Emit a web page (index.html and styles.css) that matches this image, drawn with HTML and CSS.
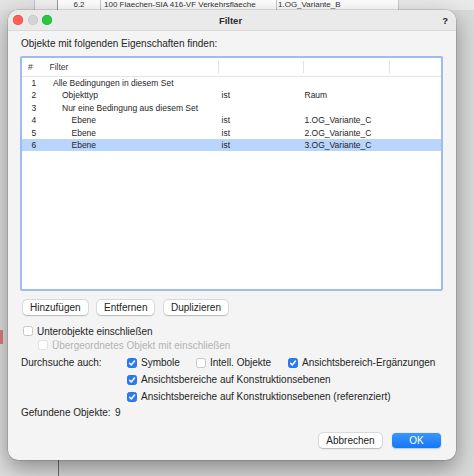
FILE: index.html
```html
<!DOCTYPE html>
<html lang="de">
<head>
<meta charset="utf-8">
<title>Filter</title>
<link rel="stylesheet" href="styles.css">
</head>
<body>
<div class="desktop">
  <div class="bg-row">
    <div class="bg-g0"></div>
    <div class="bg-g1"></div>
    <div class="bg-num">6.2</div>
    <div class="bg-name">100 Flaechen-SIA 416-VF Verkehrsflaeche</div>
    <div class="bg-val">1.OG_Variante_B</div>
    <div class="bg-rest"></div>
  </div>
  <div class="bg-body">
    <div class="bg-left"><div class="red-mark"></div></div>
    <div class="bg-main"></div>
  </div>

  <div class="dialog">
    <div class="titlebar">
      <div class="lights">
        <span class="light red"></span>
        <span class="light gray"></span>
        <span class="light green"></span>
      </div>
      <div class="title">Filter</div>
      <div class="help">?</div>
    </div>

    <div class="content">
      <div class="caption">Objekte mit folgenden Eigenschaften finden:</div>

      <div class="list">
        <div class="list-head">
          <div class="c-num h-num">#</div>
          <div class="c-name h-name">Filter</div>
          <div class="c-op sep"></div>
          <div class="c-val sep"></div>
          <div class="c-end sep"></div>
        </div>
        <div class="row"><div class="c-num">1</div><div class="c-name l0">Alle Bedingungen in diesem Set</div><div class="c-op"></div><div class="c-val"></div></div>
        <div class="row"><div class="c-num">2</div><div class="c-name l1">Objekttyp</div><div class="c-op">ist</div><div class="c-val">Raum</div></div>
        <div class="row"><div class="c-num">3</div><div class="c-name l1">Nur eine Bedingung aus diesem Set</div><div class="c-op"></div><div class="c-val"></div></div>
        <div class="row"><div class="c-num">4</div><div class="c-name l2">Ebene</div><div class="c-op">ist</div><div class="c-val">1.OG_Variante_C</div></div>
        <div class="row"><div class="c-num">5</div><div class="c-name l2">Ebene</div><div class="c-op">ist</div><div class="c-val">2.OG_Variante_C</div></div>
        <div class="row sel"><div class="c-num">6</div><div class="c-name l2">Ebene</div><div class="c-op">ist</div><div class="c-val">3.OG_Variante_C</div></div>
      </div>

      <div class="btn-row">
        <div class="btn">Hinzufügen</div>
        <div class="btn">Entfernen</div>
        <div class="btn">Duplizieren</div>
      </div>

      <div class="check-row">
        <span class="cb"></span><span>Unterobjekte einschließen</span>
      </div>
      <div class="check-row sub disabled">
        <span class="cb"></span><span>Übergeordnetes Objekt mit einschließen</span>
      </div>

      <div class="search">
        <div class="search-label">Durchsuche auch:</div>
        <div class="opt"><span class="cb on"><svg viewBox="0 0 10 10"><path d="M2.6 5.3 L4.3 7 L7.5 3.1"/></svg></span><span>Symbole</span></div>
        <div class="opt"><span class="cb"></span><span>Intell. Objekte</span></div>
        <div class="opt"><span class="cb on"><svg viewBox="0 0 10 10"><path d="M2.6 5.3 L4.3 7 L7.5 3.1"/></svg></span><span>Ansichtsbereich-Ergänzungen</span></div>
        <div class="opt span"><span class="cb on"><svg viewBox="0 0 10 10"><path d="M2.6 5.3 L4.3 7 L7.5 3.1"/></svg></span><span>Ansichtsbereiche auf Konstruktionsebenen</span></div>
        <div class="opt span"><span class="cb on"><svg viewBox="0 0 10 10"><path d="M2.6 5.3 L4.3 7 L7.5 3.1"/></svg></span><span>Ansichtsbereiche auf Konstruktionsebenen (referenziert)</span></div>
      </div>

      <div class="found">Gefundene Objekte:<span class="count">9</span></div>

      <div class="footer">
        <div class="btn cancel">Abbrechen</div>
        <div class="btn ok">OK</div>
      </div>
    </div>
  </div>
</div>
</body>
</html>
```
FILE: styles.css
```css
* { box-sizing: border-box; }
html, body { margin: 0; padding: 0; }
body {
  width: 474px;
  height: 476px;
  overflow: hidden;
  font-family: "Liberation Sans", Arial, sans-serif;
  color: #252525;
}

.desktop {
  position: relative;
  width: 474px;
  height: 476px;
  background: #dcdcdc;
  display: flex;
  flex-direction: column;
}

/* background application window */
.bg-row {
  display: flex;
  height: 10px;
  font-size: 8px;
  line-height: 10px;
  color: #333;
  white-space: nowrap;
}
.bg-g0 { width: 35px; background: #e3e3e3; border-right: 1px solid #c4c4c4; }
.bg-g1 { width: 23px; background: #f1f1f1; border-right: 1px solid #9a9a9a; }
.bg-num { width: 43px; background: #fff; border-right: 1px solid #c9c9c9; text-align: center; }
.bg-name { width: 176px; background: #fff; border-right: 1px solid #c9c9c9; padding-left: 3px; overflow: hidden; }
.bg-val { width: 122px; background: #fff; padding-left: 1px; border-right: 1px solid #c9c9c9; }
.bg-rest { flex: 1; background: #e9e9e9; }

.bg-body { flex: 1; display: flex; }
.bg-left { width: 59px; border-right: 1px solid #6f6f6f; background: #dedede; }
.bg-main { flex: 1; background: #d9d9d9; }
.red-mark { width: 3px; height: 14px; margin-top: 320px; background: #d97c7c; }

/* dialog window */
.dialog {
  position: absolute;
  left: 8px;
  top: 10px;
  width: 448px;
  height: 450px;
  background: #f4f4f4;
  border-radius: 10px;
  overflow: hidden;
  box-shadow: 0 0 0 0.5px rgba(0,0,0,0.22), 0 8px 22px rgba(0,0,0,0.38);
  display: flex;
  flex-direction: column;
}

.titlebar {
  height: 21px;
  flex: none;
  background: #eaeaea;
  border-bottom: 1px solid #d8d8d8;
  display: grid;
  grid-template-columns: 1fr auto 1fr;
  align-items: center;
  padding: 0 8px 0 5px;
}
.lights { display: flex; gap: 4.5px; }
.light { width: 10px; height: 10px; border-radius: 50%; }
.light.red { background: #fe5f57; box-shadow: inset 0 0 0 0.5px #e2463f; }
.light.gray { background: #d3d3d3; box-shadow: inset 0 0 0 0.5px #c2c2c2; }
.light.green { background: #2bc740; box-shadow: inset 0 0 0 0.5px #1fa92f; }
.title { font-weight: bold; font-size: 9.5px; color: #2e2e2e; }
.help { justify-self: end; font-weight: bold; font-size: 9.5px; color: #222; }

.content {
  flex: 1;
  display: flex;
  flex-direction: column;
  padding: 0 13px 0 12px;
  font-size: 10px;
}

.caption { margin-top: 7px; line-height: 12px; padding-left: 1px; }

.list {
  margin-top: 6px;
  height: 235px;
  flex: none;
  background: #fff;
  border: 2px solid #9fbbef;
  border-radius: 2px;
  font-size: 8.5px;
  color: #1f1f1f;
}
.list-head {
  display: flex;
  align-items: center;
  height: 19px;
  border-bottom: 1px solid #e4e4e4;
  color: #3a3a3a;
}
.list-head > div { height: 12px; line-height: 12px; }
.sep { border-left: 1px solid #e2e2e2; }
.h-num { padding-left: 6px; }
.h-name { padding-left: 3.5px; }

.c-num { width: 24px; flex: none; }
.c-name { width: 172px; flex: none; white-space: nowrap; }
.c-op { width: 85px; flex: none; }
.c-val { width: 86px; flex: none; }
.c-end { flex: 1; }

.row { display: flex; height: 12.4px; line-height: 12.4px; white-space: nowrap; }
.row .c-num { padding-left: 9.5px; }
.row .c-op { padding-left: 3.5px; }
.row .c-val { padding-left: 1.5px; }
.row.sel { background: #b9d5fb; }
.l0 { padding-left: 7px; }
.l1 { padding-left: 16px; }
.l2 { padding-left: 25.5px; }

.btn-row { margin-top: 9px; display: flex; gap: 9.5px; padding-left: 3px; }
.btn {
  height: 15px;
  line-height: 15px;
  padding: 0 7px;
  background: #fff;
  border-radius: 4px;
  color: #232323;
  box-shadow: 0 0 0 0.5px rgba(0,0,0,0.16), 0 0.5px 1.5px rgba(0,0,0,0.18);
  white-space: nowrap;
}

.check-row { display: flex; align-items: center; gap: 4px; height: 12px; margin-top: 10px; padding-left: 3px; }
.check-row.sub { margin-top: 2px; padding-left: 18px; }
.disabled { color: #b3b3b3; }
.disabled .cb { border-color: #e1e1e1; }

.cb {
  width: 10px;
  height: 10px;
  flex: none;
  border-radius: 2.5px;
  background: #fff;
  border: 1px solid #c6c6c6;
  display: block;
}
.cb.on { background: #2a7bf3; border-color: #2a72e6; }
.cb svg { display: block; width: 10px; height: 10px; margin: -1px; }
.cb svg path { fill: none; stroke: #fff; stroke-width: 1.5; stroke-linecap: round; stroke-linejoin: round; }

.search {
  margin-top: 3px;
  display: grid;
  grid-template-columns: 107px 69px 92px auto;
  grid-auto-rows: 17px;
  align-items: center;
}
.search-label { padding-left: 1px; }
.opt { display: flex; align-items: center; gap: 4px; white-space: nowrap; }
.opt.span { grid-column: 2 / -1; }

.found { margin-top: 2px; line-height: 12px; padding-left: 1px; }
.count { margin-left: 4.5px; }

.footer { margin-top: 13.5px; display: flex; justify-content: flex-end; gap: 10px; padding-right: 2px; }
.btn.cancel { width: 63px; padding: 0; text-align: center; }
.btn.ok {
  width: 49px;
  padding: 0;
  text-align: center;
  color: #fff;
  background: linear-gradient(#3a95fd, #1677f6);
  box-shadow: 0 0.5px 1.5px rgba(0,0,0,0.2);
}
```
